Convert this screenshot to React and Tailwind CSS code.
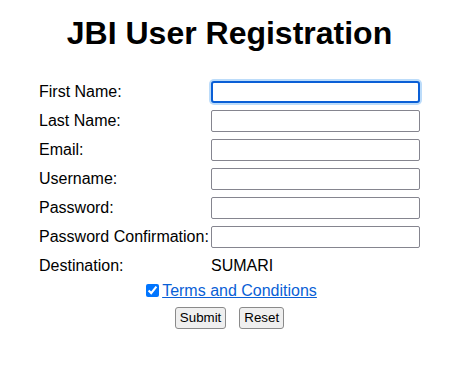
import React from 'react';

const fields = [
  { label: 'First Name:', focused: true },
  { label: 'Last Name:' },
  { label: 'Email:' },
  { label: 'Username:' },
  { label: 'Password:', type: 'password' },
  { label: 'Password Confirmation:', type: 'password' },
];

const App = () => {
  return (
    <div className="w-[459px] bg-white text-black" style={{ fontFamily: '"Liberation Sans", Arial, sans-serif' }}>
      <h1 className="pt-[15px] text-center text-[32px] font-bold leading-[37px]">JBI User Registration</h1>

      <form className="mx-auto mt-[25px] w-[385px]" onSubmit={(e) => e.preventDefault()}>
        <div className="grid grid-cols-[170px_209px] gap-x-[2px] px-[2px]">
          {fields.map((f) => (
            <React.Fragment key={f.label}>
              <label className="flex h-[29px] items-center whitespace-nowrap text-[16px] leading-[18px]">{f.label}</label>
              <div className="flex h-[29px] items-center">
                <input
                  type={f.type || 'text'}
                  className={
                    f.focused
                      ? 'h-[22px] w-[209px] rounded-[3px] border-2 border-[#0a5fd6] bg-white px-[1px] text-[13.33px] shadow-[0_0_0_2px_#bcdcfa] outline-none'
                      : 'h-[22px] w-[209px] rounded-[2px] border border-[#85858f] bg-white px-[2px] text-[13.33px] outline-none'
                  }
                />
              </div>
            </React.Fragment>
          ))}
          <div className="flex h-[29px] items-center text-[16px] leading-[18px]">Destination:</div>
          <div className="flex h-[29px] items-center text-[16px] leading-[18px]">SUMARI</div>
        </div>

        {/* terms */}
        <div className="flex h-[21px] items-center justify-center text-[16px] leading-[18px]">
          <input type="checkbox" defaultChecked className="ml-[4px] mr-[3px] h-[13px] w-[13px] accent-[#0075ff]" />
          <a href="#" className="text-[#0a5fd6] underline">Terms and Conditions</a>
        </div>

        <div className="mt-[6px] flex items-center justify-center gap-[13px]">
          <button type="submit" className="h-[22px] rounded-[3px] border border-[#8a8a8a] bg-[#efefef] px-[4px] text-[13.33px] leading-[16px]">
            Submit
          </button>
          <button type="reset" className="h-[22px] rounded-[3px] border border-[#8a8a8a] bg-[#efefef] px-[4px] text-[13.33px] leading-[16px]">
            Reset
          </button>
        </div>
      </form>
    </div>
  );
};

export default App;
